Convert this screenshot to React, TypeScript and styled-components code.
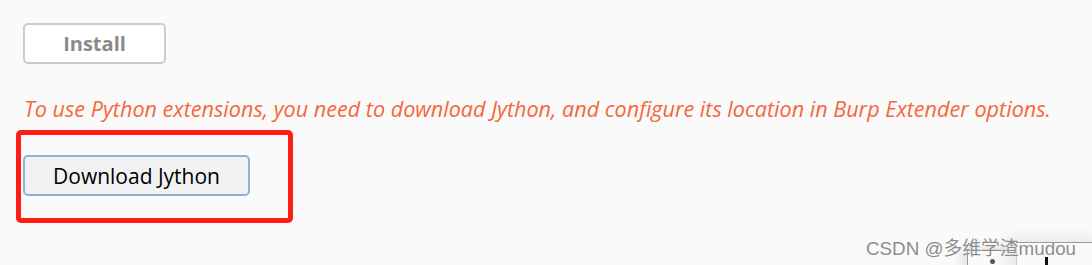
import React from "react";
import styled, { createGlobalStyle } from "styled-components";

const Global = createGlobalStyle`
  html, body { margin: 0; padding: 0; background: #fafafa; }
  body { width: 1092px; height: 265px; overflow: hidden; }
  #root { height: 265px; }
`;

const Page = styled.div`
  position: relative;
  width: 1092px;
  height: 265px;
  box-sizing: border-box;
  padding: 23px 0 0 23px;
  display: flex;
  flex-direction: column;
  align-items: flex-start;
  background: #fafafa;
  font-family: "Open Sans", "Noto Sans", sans-serif;
  overflow: hidden;
`;

const Button = styled.button<{ $variant: "disabled" | "default" }>`
  box-sizing: border-box;
  height: 41px;
  border-radius: 5px;
  font-family: "Open Sans", "Noto Sans", sans-serif;
  padding: 0;
  cursor: default;
  display: flex;
  align-items: center;
  justify-content: center;
  ${(p) =>
    p.$variant === "disabled"
      ? `
    width: 143px;
    border: 2px solid #cccccc;
    background: #ffffff;
    color: #8a8a8a;
    font-weight: 700;
    font-size: 20px;
  `
      : `
    width: 227px;
    border: 2px solid #8fb2da;
    background: #f2f2f2;
    color: #000000;
    font-weight: 400;
    font-size: 21px;
  `}
`;

const Notice = styled.p`
  margin: 32px 0 0 1px;
  font-family: "Open Sans", "Noto Sans", sans-serif;
  font-style: italic;
  font-size: 21.6px;
  line-height: 26px;
  color: #f5673c;
  white-space: nowrap;
`;

const Annotation = styled.div`
  margin: 8px 0 0 -7px;
  border: 5px solid #ff1c14;
  border-radius: 5px;
  padding: 20px 38px 22px 2px;
`;

const Watermark = styled.span`
  position: absolute;
  left: 866px;
  top: 233px;
  font-family: "Liberation Sans", "Noto Sans CJK SC", sans-serif;
  font-size: 18.8px;
  color: #8c8c8c;
  white-space: nowrap;
  text-shadow: 0 0 1px #ffffff;
  z-index: 2;
`;

const CornerPanel = styled.div`
  position: absolute;
  left: 1016px;
  top: 242px;
  width: 90px;
  height: 30px;
  border-top: 1px solid #9a9a9a;
  border-left: 1px solid #cfcfcf;
  background: #fafafa;
  box-shadow: -10px -4px 16px rgba(0, 0, 0, 0.08);
`;

const CornerTab = styled.div`
  position: absolute;
  left: 967px;
  top: 250px;
  width: 48px;
  height: 20px;
  border: 1px solid #9a9a9a;
  border-bottom: none;
  background: #fafafa;
  box-shadow: -6px -2px 12px rgba(0, 0, 0, 0.1);
  &::after {
    content: "";
    position: absolute;
    left: 22px;
    top: 8px;
    width: 5px;
    height: 5px;
    border-radius: 50%;
    background: #555;
  }
`;

const CornerMark = styled.div`
  position: absolute;
  left: 1045px;
  top: 257px;
  width: 3px;
  height: 10px;
  background: #111;
`;

export default function App() {
  return (
    <>
      <Global />
      <Page>
        <Button $variant="disabled" disabled>
          Install
        </Button>
        <Notice>
          To use Python extensions, you need to download Jython, and configure
          its location in Burp Extender options.
        </Notice>
        <Annotation>
          <Button $variant="default">Download Jython</Button>
        </Annotation>
        <CornerTab />
        <CornerPanel />
        <CornerMark />
        <Watermark>CSDN @多维学渣mudou</Watermark>
      </Page>
    </>
  );
}
